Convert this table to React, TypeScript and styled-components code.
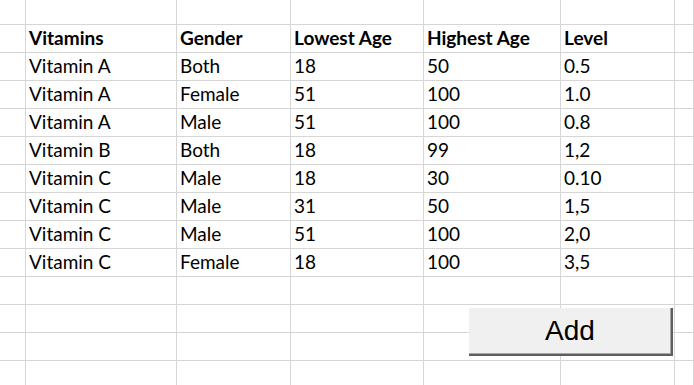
import React from "react";
import styled, { createGlobalStyle } from "styled-components";

const GlobalStyle = createGlobalStyle`
  html, body { margin: 0; padding: 0; background: #ffffff; }
  body { width: 694px; height: 385px; overflow: hidden; }
`;

const Sheet = styled.div`
  position: relative;
  width: 694px;
  height: 385px;
  overflow: hidden;
  background: #ffffff;
`;

const Grid = styled.div`
  display: grid;
  grid-template-columns: 26px 151px 114px 133px 137px 114px 1fr;
  grid-template-rows: 25px repeat(13, 28px);
  font-family: Lato, "Liberation Sans", sans-serif;
  font-size: 19px;
  color: #000000;
`;

const Cell = styled.div<{ $bold?: boolean }>`
  box-sizing: border-box;
  border-right: 1px solid #d6d6d6;
  border-bottom: 1px solid #d6d6d6;
  display: flex;
  align-items: flex-end;
  padding: 0 0 3px 3px;
  white-space: nowrap;
  overflow: visible;
  font-weight: ${(p) => (p.$bold ? 700 : 400)};
  line-height: 22px;
`;

const AddButton = styled.button`
  position: absolute;
  left: 469px;
  top: 308px;
  width: 204px;
  height: 48px;
  box-sizing: border-box;
  margin: 0;
  padding: 0 0 1px 0;
  background: #f0f0f0;
  border: none;
  border-right: 2px solid #5e5e5e;
  border-bottom: 2px solid #5e5e5e;
  box-shadow: inset -1px -1px 0 #a8a8a8;
  font-family: "Liberation Sans", Arial, sans-serif;
  font-size: 28px;
  color: #000000;
  cursor: default;
`;

const header = ["Vitamins", "Gender", "Lowest Age", "Highest Age", "Level"];
const rows: string[][] = [
  ["Vitamin A", "Both", "18", "50", "0.5"],
  ["Vitamin A", "Female", "51", "100", "1.0"],
  ["Vitamin A", "Male", "51", "100", "0.8"],
  ["Vitamin B", "Both", "18", "99", "1,2"],
  ["Vitamin C", "Male", "18", "30", "0.10"],
  ["Vitamin C", "Male", "31", "50", "1,5"],
  ["Vitamin C", "Male", "51", "100", "2,0"],
  ["Vitamin C", "Female", "18", "100", "3,5"],
];

const COLS = 7;
const TOTAL_ROWS = 14;

export default function App() {
  const allRows: (string[] | null)[] = [];
  allRows.push(null);
  allRows.push(header);
  rows.forEach((r) => allRows.push(r));
  while (allRows.length < TOTAL_ROWS) allRows.push(null);

  return (
    <Sheet>
      <GlobalStyle />
      <Grid>
        {allRows.map((r, ri) =>
          Array.from({ length: COLS }).map((_, ci) => {
            const text = r && ci >= 1 && ci <= 5 ? r[ci - 1] : "";
            return (
              <Cell key={`${ri}-${ci}`} $bold={ri === 1}>
                {text}
              </Cell>
            );
          })
        )}
      </Grid>
      <AddButton>Add</AddButton>
    </Sheet>
  );
}
